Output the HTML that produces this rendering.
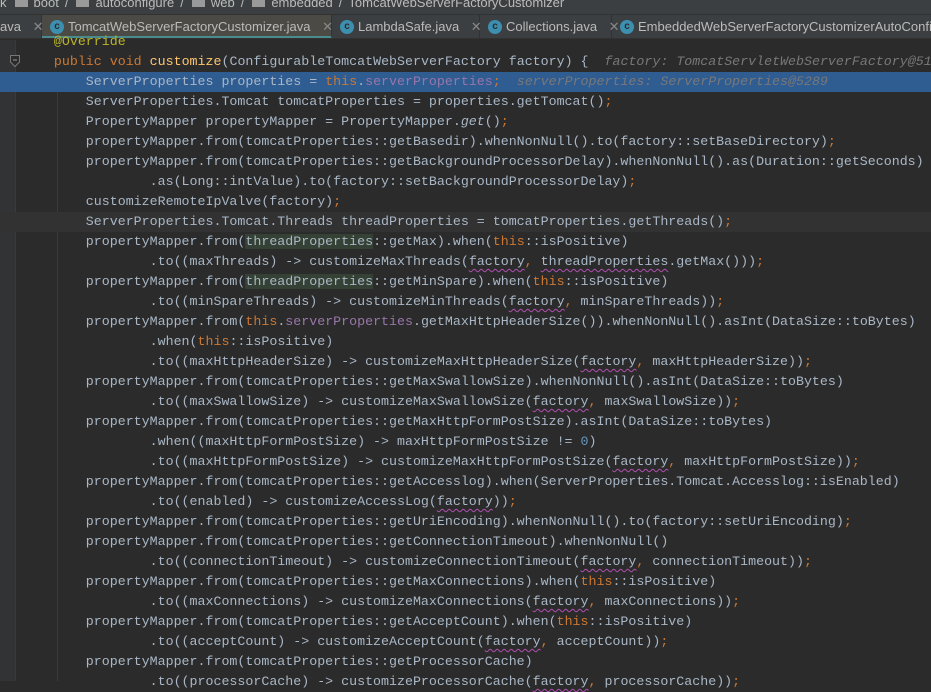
<!DOCTYPE html>
<html><head><meta charset="utf-8">
<style>
*{margin:0;padding:0;box-sizing:border-box}
body{width:931px;height:681px;overflow:hidden;background:#2b2b2b;font-family:"Liberation Mono",monospace;position:relative}
.crumb{position:absolute;left:0;top:0;width:931px;height:15px;background:#3c3f41;color:#bbbbbb;font:13px "Liberation Sans",sans-serif;line-height:6px;white-space:nowrap;overflow:hidden;border-bottom:1px solid #323232}
.crumb span{margin-right:6px}
.fold{display:inline-block;width:13px;height:7px;background:#9a9a9a;vertical-align:top;margin:0 4px 0 2px}
.tabs{position:absolute;left:0;top:15px;width:931px;height:24px;background:#3c3f41;border-bottom:1px solid #323232;font:13px "Liberation Sans",sans-serif;color:#bbbbbb;white-space:nowrap;overflow:hidden}
.tab{position:absolute;top:0;height:24px;line-height:24px;padding-left:26px;border-right:1px solid #323232}
.tab .ic{position:absolute;left:8px;top:5px;width:14px;height:14px;border-radius:50%;background:#3d8fb0;color:#2b2b2b;font:bold 10px "Liberation Sans";line-height:14px;text-align:center}
.tab .x{color:#888;margin-left:8px;font-size:13px}
.active{background:#4b4a45;border-bottom:3px solid #4a8b8e}
.gut{position:absolute;left:0;top:40px;width:16px;height:641px;background:#313335;border-right:1px solid #3a3a3a}
.code{position:absolute;left:0;top:32px;width:931px}
.l{position:absolute;left:0;height:20px;line-height:20px;font-size:13.3px;color:#a9b7c6;white-space:pre;width:931px;padding-left:6px}
.k{color:#cc7832}.m{color:#ffc66d}.f{color:#9876aa}.n{color:#6897bb}.a{color:#bbb529}
.h{color:#787878;font-style:italic}.i{font-style:italic}
.u{text-decoration:underline wavy #b04fb0;text-decoration-thickness:1px;text-underline-offset:3px}
.g{background:#344134}
.sel{background:#2f5c91}
.cur{background:#323232}
.guide{position:absolute;width:1px;background:#3b3b3b}
</style></head><body>
<div class="crumb"><span>k</span><span class="fold"></span><span>boot</span><span>/</span><span class="fold"></span><span>autoconfigure</span><span>/</span><span class="fold"></span><span>web</span><span>/</span><span class="fold"></span><span>embedded</span><span>/</span><span>TomcatWebServerFactoryCustomizer</span></div>
<div class="tabs">
<div class="tab" style="left:-26px;width:68px">ava <span class="x">✕</span></div>
<div class="tab active" style="left:42px;width:290px"><span class="ic">c</span>TomcatWebServerFactoryCustomizer.java <span class="x">✕</span></div>
<div class="tab" style="left:332px;width:148px"><span class="ic">c</span>LambdaSafe.java <span class="x">✕</span></div>
<div class="tab" style="left:480px;width:132px"><span class="ic">c</span>Collections.java <span class="x">✕</span></div>
<div class="tab" style="left:612px;width:330px"><span class="ic">c</span>EmbeddedWebServerFactoryCustomizerAutoConfiguration.java</div>
</div>
<div class="gut"></div>
<div class="guide" style="left:57px;top:90px;height:591px"></div>
<div class="code">
<div class="l" style="top:0px">      <span class="a">@Override</span></div>
<div class="l" style="top:20px">      <span class="k">public void </span><span class="m">customize</span>(ConfigurableTomcatWebServerFactory factory) {  <span class="h">factory: TomcatServletWebServerFactory@51</span></div>
<div class="l sel" style="top:40px">          ServerProperties properties = <span class="k">this</span>.<span class="f">serverProperties</span><span class="k">;</span>  <span class="h">serverProperties: ServerProperties@5289</span></div>
<div class="l" style="top:60px">          ServerProperties.Tomcat tomcatProperties = properties.getTomcat()<span class="k">;</span></div>
<div class="l" style="top:80px">          PropertyMapper propertyMapper = PropertyMapper.<span class="i">get</span>()<span class="k">;</span></div>
<div class="l" style="top:100px">          propertyMapper.from(tomcatProperties::getBasedir).whenNonNull().to(factory::setBaseDirectory)<span class="k">;</span></div>
<div class="l" style="top:120px">          propertyMapper.from(tomcatProperties::getBackgroundProcessorDelay).whenNonNull().as(Duration::getSeconds)</div>
<div class="l" style="top:140px">                  .as(Long::intValue).to(factory::setBackgroundProcessorDelay)<span class="k">;</span></div>
<div class="l" style="top:160px">          customizeRemoteIpValve(factory)<span class="k">;</span></div>
<div class="l cur" style="top:180px">          ServerProperties.Tomcat.Threads threadProperties = tomcatProperties.getThreads()<span class="k">;</span></div>
<div class="l" style="top:200px">          propertyMapper.from(<span class="g">threadProperties</span>::getMax).when(<span class="k">this</span>::isPositive)</div>
<div class="l" style="top:220px">                  .to((maxThreads) -&gt; customizeMaxThreads(<span class="u">factory</span><span class="k">, </span><span class="u">threadProperties</span>.getMax()))<span class="k">;</span></div>
<div class="l" style="top:240px">          propertyMapper.from(<span class="g">threadProperties</span>::getMinSpare).when(<span class="k">this</span>::isPositive)</div>
<div class="l" style="top:260px">                  .to((minSpareThreads) -&gt; customizeMinThreads(<span class="u">factory</span><span class="k">, </span>minSpareThreads))<span class="k">;</span></div>
<div class="l" style="top:280px">          propertyMapper.from(<span class="k">this</span>.<span class="f">serverProperties</span>.getMaxHttpHeaderSize()).whenNonNull().asInt(DataSize::toBytes)</div>
<div class="l" style="top:300px">                  .when(<span class="k">this</span>::isPositive)</div>
<div class="l" style="top:320px">                  .to((maxHttpHeaderSize) -&gt; customizeMaxHttpHeaderSize(<span class="u">factory</span><span class="k">, </span>maxHttpHeaderSize))<span class="k">;</span></div>
<div class="l" style="top:340px">          propertyMapper.from(tomcatProperties::getMaxSwallowSize).whenNonNull().asInt(DataSize::toBytes)</div>
<div class="l" style="top:360px">                  .to((maxSwallowSize) -&gt; customizeMaxSwallowSize(<span class="u">factory</span><span class="k">, </span>maxSwallowSize))<span class="k">;</span></div>
<div class="l" style="top:380px">          propertyMapper.from(tomcatProperties::getMaxHttpFormPostSize).asInt(DataSize::toBytes)</div>
<div class="l" style="top:400px">                  .when((maxHttpFormPostSize) -&gt; maxHttpFormPostSize != <span class="n">0</span>)</div>
<div class="l" style="top:420px">                  .to((maxHttpFormPostSize) -&gt; customizeMaxHttpFormPostSize(<span class="u">factory</span><span class="k">, </span>maxHttpFormPostSize))<span class="k">;</span></div>
<div class="l" style="top:440px">          propertyMapper.from(tomcatProperties::getAccesslog).when(ServerProperties.Tomcat.Accesslog::isEnabled)</div>
<div class="l" style="top:460px">                  .to((enabled) -&gt; customizeAccessLog(<span class="u">factory</span>))<span class="k">;</span></div>
<div class="l" style="top:480px">          propertyMapper.from(tomcatProperties::getUriEncoding).whenNonNull().to(factory::setUriEncoding)<span class="k">;</span></div>
<div class="l" style="top:500px">          propertyMapper.from(tomcatProperties::getConnectionTimeout).whenNonNull()</div>
<div class="l" style="top:520px">                  .to((connectionTimeout) -&gt; customizeConnectionTimeout(<span class="u">factory</span><span class="k">, </span>connectionTimeout))<span class="k">;</span></div>
<div class="l" style="top:540px">          propertyMapper.from(tomcatProperties::getMaxConnections).when(<span class="k">this</span>::isPositive)</div>
<div class="l" style="top:560px">                  .to((maxConnections) -&gt; customizeMaxConnections(<span class="u">factory</span><span class="k">, </span>maxConnections))<span class="k">;</span></div>
<div class="l" style="top:580px">          propertyMapper.from(tomcatProperties::getAcceptCount).when(<span class="k">this</span>::isPositive)</div>
<div class="l" style="top:600px">                  .to((acceptCount) -&gt; customizeAcceptCount(<span class="u">factory</span><span class="k">, </span>acceptCount))<span class="k">;</span></div>
<div class="l" style="top:620px">          propertyMapper.from(tomcatProperties::getProcessorCache)</div>
<div class="l" style="top:640px">                  .to((processorCache) -&gt; customizeProcessorCache(<span class="u">factory</span><span class="k">, </span>processorCache))<span class="k">;</span></div>
</div>
<svg style="position:absolute;left:9px;top:54px" width="12" height="14"><path d="M1.5 1.5H10.5V8L6 12.5L1.5 8Z" fill="#2b2b2b" stroke="#777"/><path d="M4 6H8" stroke="#999"/></svg>
</body></html>
